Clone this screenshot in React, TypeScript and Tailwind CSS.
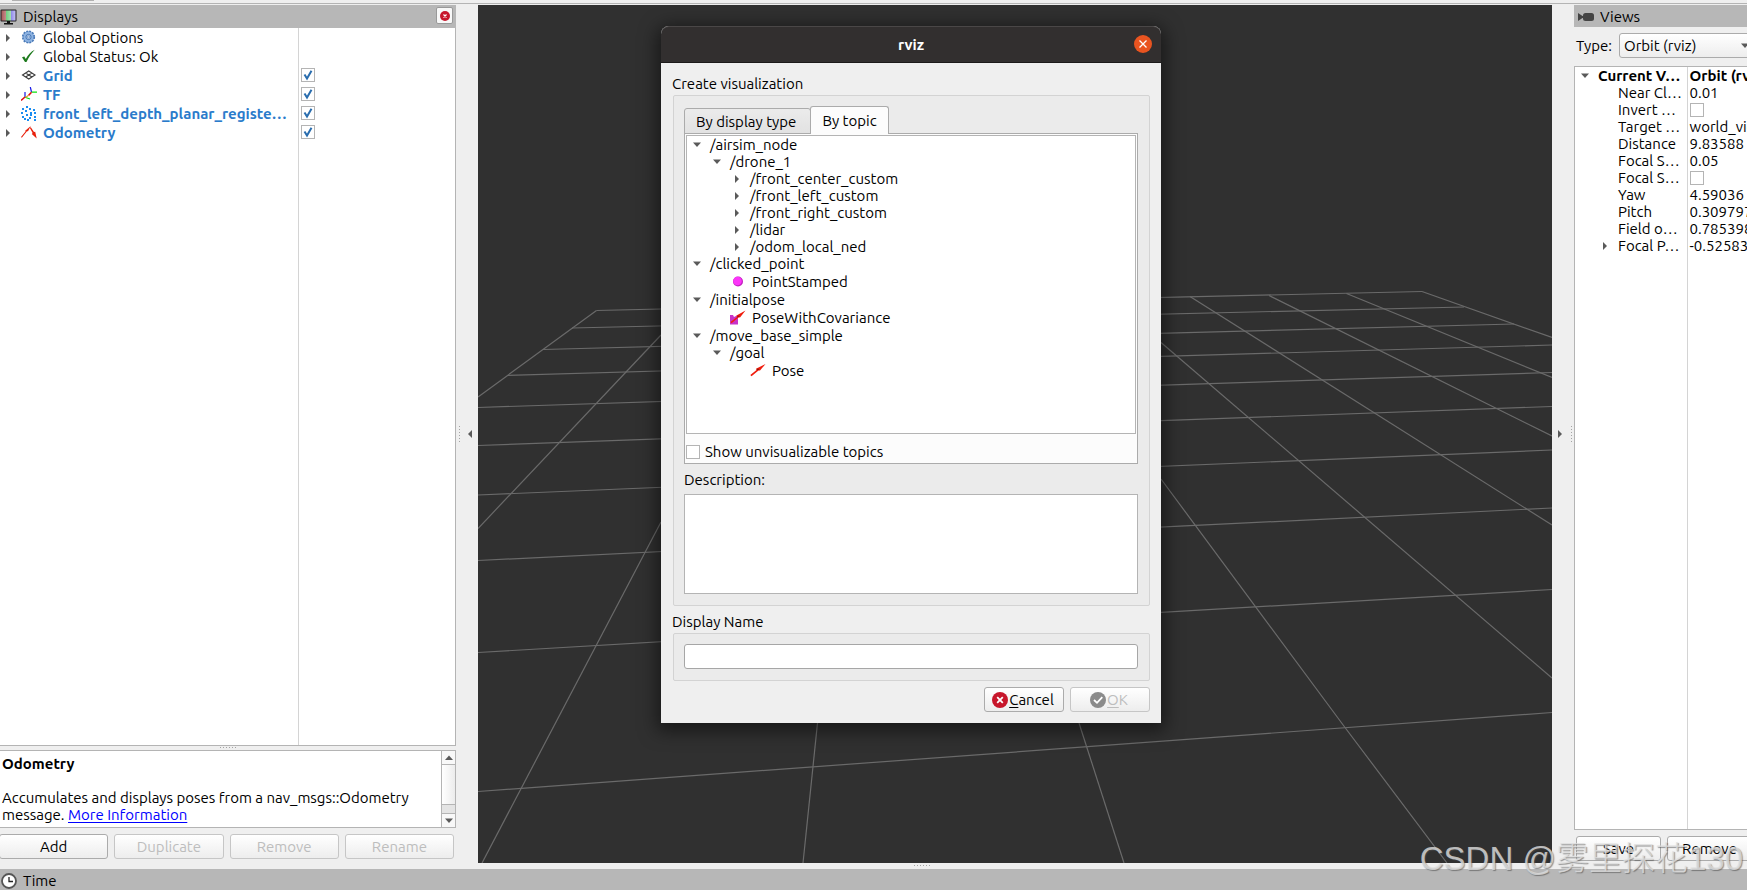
import React, { useState } from "react";

type IconName =
  | "gear"
  | "check"
  | "grid"
  | "tf"
  | "cloud"
  | "odometry"
  | "point"
  | "poseCov"
  | "pose";

const cloudDots = [
  [5, 0], [1, 2], [8, 2], [12, 3], [4, 4], [0, 6], [9, 6], [13, 6], [5, 8],
  [1, 10], [9, 8], [13, 10], [8, 11], [3, 12], [6, 13], [13, 13],
];

const Icon = ({ name }: { name: IconName }) => (
  <svg viewBox="0 0 16 16" className="size-4 shrink-0" aria-hidden="true">
    {name === "gear" && (
      <g>
        <circle cx="7.500" cy="7" r="5.700" fill="#7ba4d8" stroke="#4a7ab8" strokeWidth="1.800" strokeDasharray="2 0.980" />
        <circle cx="7.500" cy="7" r="4.900" fill="#8db3e2" />
        <circle cx="7.500" cy="7" r="2.600" fill="#a9c6ec" stroke="#3f6fae" strokeWidth="0.900" />
        <circle cx="7.500" cy="7" r="1" fill="#fff" stroke="#3f6fae" strokeWidth="0.600" />
      </g>
    )}
    {name === "check" && <path d="M1 8.300 L3.300 7.500 L4.800 10 C7 6 10 2.500 13.800 0.800 C10.500 4.500 7.800 8 5.500 13 H4 Z" fill="#1d7a1d" />}
    {name === "grid" && (
      <path d="M7.800 3 L14 7 L7.800 11 L1.500 7 Z M4.600 5 L11 9 M11 5 L4.600 9" fill="none" stroke="#3c3c3c" strokeWidth="1.100" />
    )}
    {name === "tf" && (
      <g fill="none" strokeWidth="1.200">
        <path d="M4 10 V5 M10.500 5 L9.300 0" stroke="#1818e8" />
        <path d="M4 10.200 L9 12 M10.500 5.200 H16" stroke="#0be00b" />
        <path d="M0 13.500 L4 10" stroke="#e01010" strokeWidth="1.600" />
        <path d="M7.500 8.500 L10.500 5.200" stroke="#e01010" strokeWidth="1.600" />
        <path d="M4.500 10.500 L7.300 8.500" stroke="#e8a020" />
      </g>
    )}
    {name === "cloud" && cloudDots.map(([x, y]) => <rect key={`${x}-${y}`} x={x} y={y} width="2" height="2" fill="#1a8cf0" />)}
    {name === "odometry" && (
      <g fill="#e8200c">
        <path d="M0 12 L4.500 6.500 L4.200 5.700 L9.800 1 L7 6.300 L6 6.200 L0.800 12.700 Z" />
        <path d="M8.800 2.800 L9.800 2.200 L13 7 L14.200 6.800 L15.700 13.500 L10.800 9 L11.600 8 Z" />
      </g>
    )}
    {name === "point" && (
      <g>
        <circle cx="8" cy="7.500" r="5" fill="#c21fc0" />
        <circle cx="7.500" cy="7" r="4.300" fill="#fb35f8" />
      </g>
    )}
    {name === "poseCov" && (
      <g>
        <path d="M0 5 H3 L4 7 L8 5 V14.500 H0 Z" fill="#c832c8" />
        <path d="M0.500 12 L7 7 L6.500 5.500 L15.500 0.500 L10 7.500 L8.800 7.300 L1.500 13.200 Z" fill="#f01c0c" />
        <path d="M7 5.900 L9 5.500 L9.500 6.700 L8 7.400 Z" fill="#a01408" />
      </g>
    )}
    {name === "pose" && (
      <g>
        <path d="M0.300 12 L6.500 7 L6 5.700 L15.500 1 L10 7.500 L8.500 7.500 L1.500 13.300 Z" fill="#f01c0c" />
        <path d="M6.500 5.900 L8.500 5.500 L9.300 6.700 L7.500 7.300 Z" fill="#901408" />
      </g>
    )}
  </svg>
);

const arrowPaths = {
  right: "M3 1 L7 5 L3 9 Z",
  left: "M6 1 L2 5 L6 9 Z",
  down: "M1 2.500 H9 L5 7 Z",
  up: "M1 7 H9 L5 2.500 Z",
};

const Arrow = ({ dir }: { dir: keyof typeof arrowPaths }) => (
  <svg viewBox="0 0 10 10" className="size-2.5 shrink-0" aria-hidden="true">
    <path d={arrowPaths[dir]} fill="#5a5a5a" />
  </svg>
);

type checkBoxProps = {
  label: string;
  id?: string;
  checked?: boolean;
};

const CheckBox = ({ label, id, checked = false }: checkBoxProps) => (
  <span className="relative block size-3.5 shrink-0">
    <input
      type="checkbox"
      id={id}
      aria-label={label}
      defaultChecked={checked}
      className="peer block size-3.5 appearance-none border border-[#b4b4b4] bg-white"
    />
    <svg viewBox="0 0 14 14" className="pointer-events-none absolute inset-0 hidden size-3.5 peer-checked:block">
      <path d="M3.500 6.500 L6 10.500 L10.500 2.800" fill="none" stroke="#2a6dae" strokeWidth="2" />
    </svg>
  </span>
);

const Grip = ({ vertical = false }: { vertical?: boolean }) => (
  <svg viewBox={vertical ? "0 0 2 16" : "0 0 17 2"} className={vertical ? "h-4 w-0.5" : "h-0.5 w-[17px]"} aria-hidden="true">
    {[0, 3, 6, 9, 12, 15].map((step) => (
      <rect key={step} x={vertical ? 0 : step} y={vertical ? step : 0} width="1" height="1" fill="#a4a4a4" />
    ))}
  </svg>
);

type displayRow = { name: string; icon: IconName; enabled?: boolean };

const displays: displayRow[] = [
  { name: "Global Options", icon: "gear" },
  { name: "Global Status: Ok", icon: "check" },
  { name: "Grid", icon: "grid", enabled: true },
  { name: "TF", icon: "tf", enabled: true },
  { name: "front_left_depth_planar_registe…", icon: "cloud", enabled: true },
  { name: "Odometry", icon: "odometry", enabled: true },
];

const panelButton =
  "h-[25px] rounded-[3px] border border-[#ababab] bg-linear-to-b from-white to-[#ededed] text-center disabled:border-[#c6c6c6] disabled:text-[#bdbdbd]";

const DisplaysPanel = () => (
  <aside className="flex w-[456px] shrink-0 flex-col">
    <header className="flex h-[23px] shrink-0 items-center bg-[#b7b7b7] pr-[3px]">
      <svg viewBox="0 0 17 16" className="mr-1.5 h-4 w-[17px]" aria-hidden="true">
        <rect x="0.500" y="0.500" width="16" height="12" rx="1" fill="#222" />
        <linearGradient id="screenShade" x1="0" y1="0" x2="1" y2="0">
          <stop offset="0" stopColor="#a85c5c" />
          <stop offset="0.330" stopColor="#c88c8c" />
          <stop offset="0.340" stopColor="#6fcf80" />
          <stop offset="0.660" stopColor="#a4e0ae" />
          <stop offset="0.670" stopColor="#8d88e8" />
          <stop offset="1" stopColor="#c4c0f6" />
        </linearGradient>
        <rect x="1.500" y="1.500" width="14" height="10" fill="url(#screenShade)" />
        <path d="M7 12 H10 V14 H13 V15.500 H4 V14 H7 Z" fill="#111" />
      </svg>
      <h2 className="flex-1">Displays</h2>
      <button aria-label="Close Displays" className="mb-0.5 flex size-[17px] items-center justify-center rounded-xs border border-[#999] bg-[#f8f8f8]">
        <svg viewBox="0 0 10 10" className="size-2.5">
          <circle cx="5" cy="5" r="5" fill="#c7162b" />
          <path d="M3.500 3.500 L6.500 6.500 M6.500 3.500 L3.500 6.500" stroke="#fff" strokeWidth="1.2" />
        </svg>
      </button>
    </header>

    <div className="flex min-h-0 flex-1 border-r border-b border-[#b4b4b4] bg-white">
      <ul className="w-[299px] border-r border-[#d4d4d4]">
        {displays.map((row) => (
          <li key={row.name} className="flex h-[19px] items-center pl-[3px]">
            <button aria-label={`Expand ${row.name}`}>
              <Arrow dir="right" />
            </button>
            <span className="mr-1.5 ml-2">
              <Icon name={row.icon} />
            </span>
            <span className={row.enabled ? "font-bold whitespace-nowrap text-[#2a7bcb]" : "whitespace-nowrap"}>{row.name}</span>
          </li>
        ))}
      </ul>
      <ul className="pl-0.5">
        {displays.map((row) => (
          <li key={row.name} className="h-[19px] pt-0.5">
            {row.enabled && <CheckBox label={`Enable ${row.name}`} checked />}
          </li>
        ))}
      </ul>
    </div>

    <div className="flex h-1 shrink-0 items-center justify-center">
      <Grip />
    </div>

    <section className="flex h-[78px] shrink-0 border-y border-r border-[#b4b4b4] bg-white">
      <div className="flex-1 pt-1 pl-0.5">
        <h3 className="font-bold">Odometry</h3>
        <p className="pt-[17px] whitespace-nowrap">
          Accumulates and displays poses from a nav_msgs::Odometry
          <br />
          message.{" "}
          <a href="#odometry" className="text-[#0000ff] underline underline-offset-2">
            More Information
          </a>
        </p>
      </div>
      <div className="flex w-3.5 flex-col border-l border-[#b4b4b4] bg-[#e4e4e4]">
        <button aria-label="Scroll up" className="flex h-[13px] items-center justify-center bg-[#f8f8f8]">
          <Arrow dir="up" />
        </button>
        <div className="flex-1 border-y border-[#b4b4b4] bg-linear-to-r from-white to-[#ececec]" />
        <div className="h-2" />
        <button aria-label="Scroll down" className="flex h-3.5 items-center justify-center border-t border-[#b4b4b4] bg-[#f8f8f8]">
          <Arrow dir="down" />
        </button>
      </div>
    </section>

    <div className="mt-1.5 mr-0.5 mb-1 -ml-px grid shrink-0 grid-cols-4 gap-1.5">
      <button className={panelButton}>Add</button>
      <button className={panelButton} disabled>
        Duplicate
      </button>
      <button className={panelButton} disabled>
        Remove
      </button>
      <button className={panelButton} disabled>
        Rename
      </button>
    </div>
  </aside>
);

// ground plane seen in perspective, one entry per grid line
const gridLines = [
  "596.500,310.500 1422,291.500",
  "572,328 1464,307",
  "543,349.500 1514,324",
  "507,375.500 1552,345",
  "478,407.500 1552,372.500",
  "478,445.500 1552,406.500",
  "478,495 1552,450",
  "478,560.500 1552,508",
  "478,652.500 1552,589.500",
  "478,791.500 1552,712.500",
  "596.500,310.500 478,397",
  "661,335 478,528.500",
  "661,522 482,863",
  "817.500,723 803,863",
  "1079,723 1124,863",
  "1161,479 1345,727.500 1447,863",
  "1161,342.500 1552,678",
  "1190,296.500 1552,525",
  "1269,295.500 1552,436",
  "1346.500,293.500 1552,377.500",
  "1422,291.500 1552,337.500",
];

const RenderView = () => (
  <main className="min-w-0 flex-1 bg-[#303030]">
    <svg viewBox="478 5 1074 858" preserveAspectRatio="none" className="block h-full w-full" aria-label="3D view">
      {gridLines.map((points) => (
        <polyline key={points} points={points} fill="none" stroke="#6a6a6a" strokeWidth="1.200" />
      ))}
    </svg>
  </main>
);

type property = { name: string; value: string | boolean; child?: boolean };

const properties: property[] = [
  { name: "Near Cl…", value: "0.01" },
  { name: "Invert …", value: false },
  { name: "Target …", value: "world_view" },
  { name: "Distance", value: "9.83588" },
  { name: "Focal S…", value: "0.05" },
  { name: "Focal S…", value: false },
  { name: "Yaw", value: "4.59036" },
  { name: "Pitch", value: "0.309797" },
  { name: "Field o…", value: "0.785398" },
  { name: "Focal P…", value: "-0.52583", child: true },
];

const ViewsPanel = () => (
  <aside className="w-[173px] shrink-0 overflow-hidden">
    <div className="flex h-full w-[180px] flex-col">
      <header className="flex h-[22px] shrink-0 items-center bg-[#b7b7b7] pt-px pl-1">
        <svg viewBox="0 0 16 10" className="mr-1.5 h-2.5 w-4" aria-hidden="true">
          <path d="M0 1 L4.500 4 V6 L0 9 Z" fill="#444" />
          <path d="M3 5 H6" stroke="#444" strokeWidth="2" />
          <rect x="5" y="1" width="11" height="8" rx="2.500" fill="#444" />
        </svg>
        <h2>Views</h2>
      </header>

      <div className="flex shrink-0 items-center py-1.5 pl-0.5">
        <label htmlFor="viewType" className="w-[43px]">
          Type:
        </label>
        <div className="relative flex-1">
          <select
            id="viewType"
            className="block h-[25px] w-full appearance-none rounded-[3px] border border-[#ababab] bg-linear-to-b from-white to-[#ededed] pl-1"
          >
            <option>Orbit (rviz)</option>
          </select>
          <span className="pointer-events-none absolute top-2 right-1">
            <Arrow dir="down" />
          </span>
        </div>
      </div>

      <div className="mt-0.5 min-h-0 flex-1 border border-[#b4b4b4] bg-white">
        <table className="h-full w-full table-fixed border-collapse whitespace-nowrap">
          <tbody>
            <tr className="h-[17px] font-bold">
              <td className="w-28 overflow-hidden border-r border-[#d4d4d4] p-0">
                <div className="flex items-center pl-[5px]">
                  <button aria-label="Collapse Current View">
                    <Arrow dir="down" />
                  </button>
                  <span className="pl-2">Current V…</span>
                </div>
              </td>
              <td className="p-0 pl-0.5">Orbit (rviz)</td>
            </tr>
            {properties.map((prop, index) => (
              <tr key={index} className="h-[17px]">
                <td className="overflow-hidden border-r border-[#d4d4d4] p-0">
                  <div className="flex items-center pl-[25px]">
                    <span className="flex w-[18px]">
                      {prop.child && (
                        <button aria-label={`Expand ${prop.name}`}>
                          <Arrow dir="right" />
                        </button>
                      )}
                    </span>
                    {prop.name}
                  </div>
                </td>
                <td className="p-0 pl-0.5">
                  {typeof prop.value === "boolean" ? <CheckBox label={prop.name} checked={prop.value} /> : prop.value}
                </td>
              </tr>
            ))}
            <tr>
              <td className="border-r border-[#d4d4d4] p-0" />
              <td className="p-0" />
            </tr>
          </tbody>
        </table>
      </div>

      <div className="flex shrink-0 gap-1.5 pt-1.5 pb-0.5 pl-0.5">
        <button className={`${panelButton} w-[85px]`}>Save</button>
        <button className={`${panelButton} w-[85px]`}>Remove</button>
      </div>
    </div>
  </aside>
);

type topic = { name: string; depth: number; open?: boolean; icon?: IconName };

const topics: topic[] = [
  { name: "/airsim_node", depth: 0, open: true },
  { name: "/drone_1", depth: 1, open: true },
  { name: "/front_center_custom", depth: 2 },
  { name: "/front_left_custom", depth: 2 },
  { name: "/front_right_custom", depth: 2 },
  { name: "/lidar", depth: 2 },
  { name: "/odom_local_ned", depth: 2 },
  { name: "/clicked_point", depth: 0, open: true },
  { name: "PointStamped", depth: 1, icon: "point" },
  { name: "/initialpose", depth: 0, open: true },
  { name: "PoseWithCovariance", depth: 1, icon: "poseCov" },
  { name: "/move_base_simple", depth: 0, open: true },
  { name: "/goal", depth: 1, open: true },
  { name: "Pose", depth: 2, icon: "pose" },
];

const indents = ["pl-[5px]", "pl-[25px]", "pl-[45px]"];

const TopicTree = () => (
  <ul className="h-[299px] border border-[#b4b4b4] bg-white">
    {topics.map((row) =>
      row.icon ? (
        <li key={row.name} className={`flex h-[19px] items-center ${indents[row.depth]}`}>
          <span className="mr-1.5 ml-[18px]">
            <Icon name={row.icon} />
          </span>
          {row.name}
        </li>
      ) : (
        <li key={row.name} className={`flex h-[17px] items-center ${indents[row.depth]}`}>
          <button aria-label={`Toggle ${row.name}`}>
            <Arrow dir={row.open ? "down" : "right"} />
          </button>
          <span className="pl-2">{row.name}</span>
        </li>
      ),
    )}
  </ul>
);

const CreateDialog = () => {
  const [tab, setTab] = useState("topic");
  const [displayName, setDisplayName] = useState("");

  const activeTab = "relative -ml-px h-7 rounded-t-[3px] border border-b-0 border-[#ababab] bg-[#fcfcfc] px-[11px]";
  const idleTab = "h-[26px] rounded-t-[3px] border border-[#ababab] bg-linear-to-b from-[#ebebeb] to-[#e2e2e2] pr-3.5 pl-[11px]";

  return (
    <div
      role="dialog"
      aria-label="rviz"
      className="absolute top-[26px] left-[661px] w-[500px] rounded-t-lg bg-[#efefef] shadow-[0_4px_18px_4px_rgba(0,0,0,0.5)]"
    >
      <header className="flex h-[37px] items-center rounded-t-lg border-t border-b border-t-[#4a4747] border-b-[#1c1a1a] bg-[#322f2f] pr-[9px] pl-[27px] text-white">
        <h1 className="flex-1 text-center font-bold">rviz</h1>
        <button aria-label="Close" className="mb-0.5 flex size-[18px] items-center justify-center rounded-full bg-[#e95420]">
          <svg viewBox="0 0 8 8" className="size-2">
            <path d="M0.500 0.500 L7.500 7.500 M7.500 0.500 L0.500 7.500" stroke="#fff" strokeWidth="1.300" />
          </svg>
        </button>
      </header>

      <div className="px-[11px] pt-3 pb-[11px]">
        <h2 className="mb-0.5 leading-[18px]">Create visualization</h2>
        <div className="ml-px rounded-xs border border-[#d3d3d3] bg-[#ebebeb] pt-2.5 pr-[11px] pb-[11px] pl-2.5">
          <div role="tablist" className="-mb-px flex items-end">
            <button role="tab" aria-selected={tab === "type"} onClick={() => setTab("type")} className={tab === "type" ? activeTab : idleTab}>
              By display type
            </button>
            <button role="tab" aria-selected={tab === "topic"} onClick={() => setTab("topic")} className={tab === "topic" ? activeTab : idleTab}>
              By topic
            </button>
          </div>
          <div className="border border-[#ababab] bg-[#fcfcfc] p-px pb-0">
            <TopicTree />
            <div className="flex h-[29px] items-center gap-[5px] pt-1.5">
              <CheckBox id="unvisualizable" label="Show unvisualizable topics" />
              <label htmlFor="unvisualizable">Show unvisualizable topics</label>
            </div>
          </div>
          <label htmlFor="description" className="flex h-[30px] items-center">
            Description:
          </label>
          <textarea id="description" readOnly className="block h-[100px] w-full resize-none border border-[#b4b4b4] bg-white p-1 outline-none" />
        </div>

        <label htmlFor="displayName" className="mb-0.5 block pt-[7px] leading-[18px]">
          Display Name
        </label>
        <div className="ml-px rounded-xs border border-[#d3d3d3] bg-[#ebebeb] pt-2.5 pr-[11px] pb-[11px] pl-2.5">
          <input
            id="displayName"
            type="text"
            value={displayName}
            onChange={(e) => setDisplayName(e.target.value)}
            className="block h-[25px] w-full rounded-[3px] border border-[#a6a6a6] bg-white px-1 outline-none"
          />
        </div>

        <div className="mt-1.5 flex justify-end gap-1.5">
          <button className={`${panelButton} flex w-20 items-center justify-center gap-px pr-0.5`}>
            <svg viewBox="0 0 16 16" className="size-4 shrink-0">
              <circle cx="8" cy="8" r="8" fill="#c7162b" />
              <path d="M5.200 5.200 L10.800 10.800 M10.800 5.200 L5.200 10.800" stroke="#fff" strokeWidth="1.800" />
            </svg>
            <span>
              <u className="underline-offset-2">C</u>ancel
            </span>
          </button>
          <button disabled className={`${panelButton} flex w-20 items-center justify-center gap-px pr-0.5`}>
            <svg viewBox="0 0 16 16" className="size-4 shrink-0">
              <circle cx="8" cy="8" r="8" fill="#8b8b8b" />
              <path d="M4 8 L7 10.800 L12.300 5.200" fill="none" stroke="#fff" strokeWidth="1.800" />
            </svg>
            <span>
              <u className="underline-offset-2">O</u>K
            </span>
          </button>
        </div>
      </div>
    </div>
  );
};

const App = () => {
  return (
    <div className="relative flex h-screen flex-col overflow-hidden bg-[#efefef] font-[Ubuntu,'Noto_Sans','Noto_Sans_CJK_SC',sans-serif] text-[15px] leading-[17px] text-black">
      {/* bottom edge of the toolbar */}
      <div className="h-[5px] shrink-0 px-3">
        <div className="h-px w-[82px] bg-[#b0b0b0]" />
        <div className="-mx-3 mt-0.5 h-px bg-[#b4b4b4]" />
      </div>

      <div className="flex min-h-0 flex-1">
        <DisplaysPanel />
        <div className="flex w-[22px] shrink-0 items-center gap-[5px] pl-[3px]">
          <Grip vertical />
          <Arrow dir="left" />
        </div>
        <RenderView />
        <div className="flex w-[22px] shrink-0 items-center gap-1.5 pl-[3px]">
          <Arrow dir="right" />
          <Grip vertical />
        </div>
        <ViewsPanel />
      </div>

      <div className="flex h-1.5 shrink-0 items-center justify-center pl-[98px]">
        <Grip />
      </div>

      <footer className="flex h-[21px] shrink-0 items-center bg-[#b7b7b7] pt-0.5 pl-px">
        <svg viewBox="0 0 16 16" className="mr-1.5 size-4" aria-hidden="true">
          <circle cx="8" cy="8" r="7" fill="#fff" stroke="#555" strokeWidth="1.800" />
          <path d="M8 4 V8.500 H12" fill="none" stroke="#222" strokeWidth="1.300" />
        </svg>
        Time
      </footer>

      <CreateDialog />

      <div className="pointer-events-none absolute right-1 bottom-2 font-['Liberation_Sans','Noto_Sans_CJK_SC',sans-serif] text-[33px] leading-[46px] font-light whitespace-nowrap text-[#e0e0e0]/80 [text-shadow:1px_1px_1px_rgba(80,80,80,0.6)]">
        CSDN @雾里探花130
      </div>
    </div>
  );
};

export default App;
